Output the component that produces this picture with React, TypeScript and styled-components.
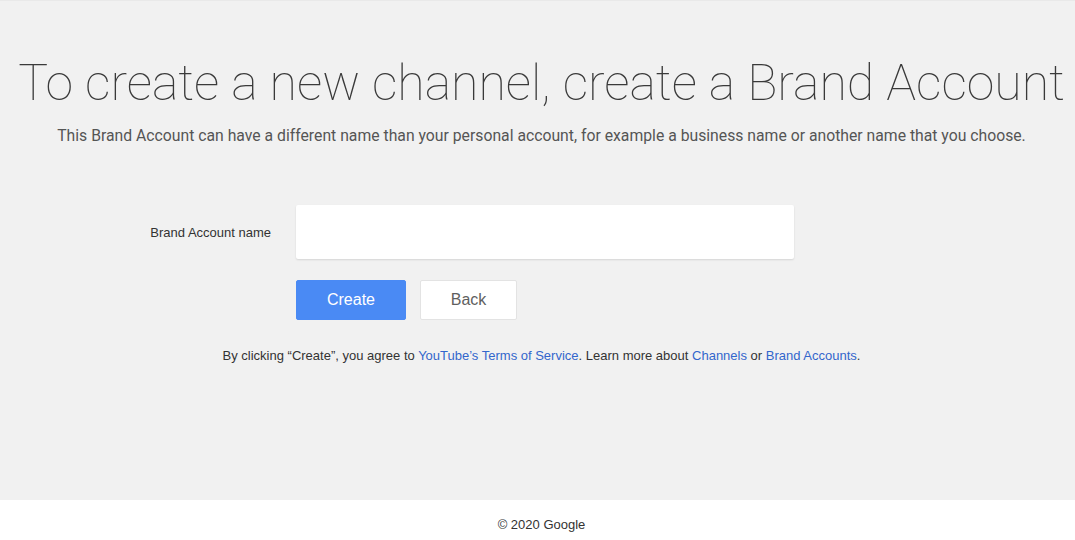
import styled, { createGlobalStyle } from 'styled-components'

const GlobalStyle = createGlobalStyle`
  html, body {
    margin: 0;
    padding: 0;
    background: #f1f1f1;
  }
  body {
    font-family: Arial, "Liberation Sans", sans-serif;
  }
`;

const Page = styled.div`
  display: flex;
  flex-direction: column;
  height: 540px;
  border-top: 1px solid #e9e9e9;
  box-sizing: border-box;
`;

const Main = styled.main`
  flex: 1;
  display: flex;
  flex-direction: column;
  align-items: center;
  background: #f1f1f1;
  padding: 50px 0 0 8px;
`;

const Title = styled.h1`
  margin: 0;
  font-family: Roboto, "Noto Sans", sans-serif;
  font-weight: 100;
  font-size: 50px;
  line-height: 64px;
  color: #3a3a3a;
  white-space: nowrap;
`;

const Subtitle = styled.p`
  margin: 9px 0 0;
  font-family: Roboto, "Noto Sans", sans-serif;
  font-weight: 400;
  font-size: 15.75px;
  line-height: 24px;
  color: #555;
  white-space: nowrap;
`;

const Form = styled.div`
  display: grid;
  grid-template-columns: 271px 498px;
  column-gap: 25px;
  row-gap: 21px;
  margin-top: 57px;
  margin-right: 289px;
`;

const Label = styled.label`
  align-self: center;
  justify-self: end;
  font-size: 13px;
  color: #333;
`;

const Input = styled.input`
  height: 54px;
  box-sizing: border-box;
  border: none;
  border-radius: 2px;
  background: #fff;
  box-shadow: 0 1px 2px rgba(0, 0, 0, 0.12);
  outline: none;
  padding: 0 12px;
  font-size: 16px;
`;

const Actions = styled.div`
  grid-column: 2;
  display: flex;
  gap: 14px;
`;

interface ButtonProps {
  $primary?: boolean;
  $width: number;
}

const Button = styled.button<ButtonProps>`
  width: ${(p) => p.$width}px;
  height: 40px;
  box-sizing: border-box;
  border-radius: 2px;
  font-family: Arial, "Liberation Sans", sans-serif;
  font-size: 16px;
  cursor: pointer;
  background: ${(p) => (p.$primary ? '#4a8af4' : '#fff')};
  color: ${(p) => (p.$primary ? '#fff' : '#5f5f5f')};
  border: 1px solid ${(p) => (p.$primary ? '#4a8af4' : '#e3e3e3')};
`;

const Terms = styled.p`
  margin: 28px 0 0;
  font-size: 13px;
  color: #333;
  white-space: nowrap;
`;

const Link = styled.a`
  color: #3366cc;
  text-decoration: none;
`;

const Footer = styled.footer`
  height: 40px;
  box-sizing: border-box;
  padding: 17px 0 0 8px;
  background: #fff;
  text-align: center;
  font-size: 13px;
  color: #333;
`;

const App = () => {
  return (
    <Page>
      <GlobalStyle />
      <Main>
        <Title>To create a new channel, create a Brand Account</Title>
        <Subtitle>
          This Brand Account can have a different name than your personal account, for example a business name or another name that you choose.
        </Subtitle>
        <Form>
          <Label htmlFor="brand-name">Brand Account name</Label>
          <Input id="brand-name" type="text" />
          <Actions>
            <Button $primary $width={110}>Create</Button>
            <Button $width={97}>Back</Button>
          </Actions>
        </Form>
        <Terms>
          By clicking “Create”, you agree to <Link href="#">YouTube’s Terms of Service</Link>. Learn more about{' '}
          <Link href="#">Channels</Link> or <Link href="#">Brand Accounts</Link>.
        </Terms>
      </Main>
      <Footer>© 2020 Google</Footer>
    </Page>
  );
}

export default App;
